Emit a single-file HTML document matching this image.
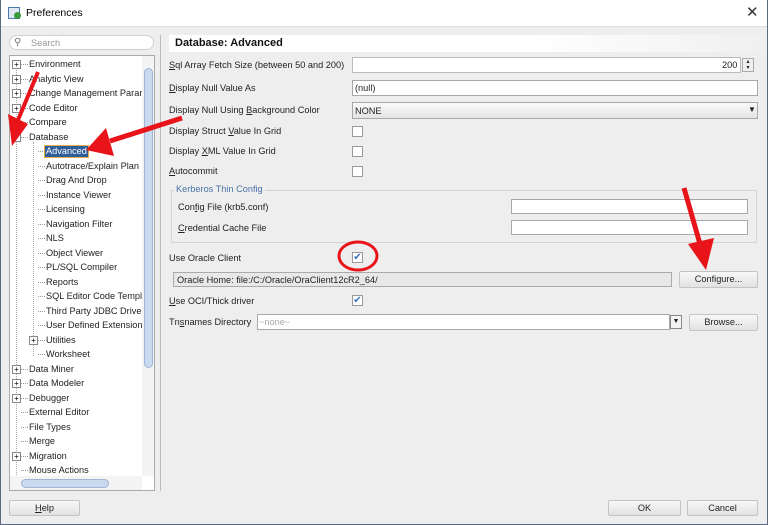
<!DOCTYPE html>
<html><head><style>
*{box-sizing:border-box;margin:0;padding:0}
body{width:768px;height:525px;background:#eeeeee;font-family:"Liberation Sans",sans-serif;font-size:9.2px;color:#222;position:relative;overflow:hidden}
.a{position:absolute;white-space:nowrap}
.win{position:absolute;left:0;top:0;width:768px;height:525px;border:1px solid #5a6a80;border-top:none}
.tb{position:absolute;left:0;top:0;width:768px;height:27px;background:#fff;border-bottom:1px solid #ddd}
.inp{position:absolute;background:#fff;border:1px solid #a8a8a8}
.cb{position:absolute;width:11px;height:11px;border:1px solid #999;background:#fff}
.btn{position:absolute;height:17px;border:1px solid #c4c4c4;border-radius:2px;background:linear-gradient(#f8f8f8,#e2e2e2);text-align:center;line-height:15px}
.pm{position:absolute;width:9px;height:9px;border:1px solid #888;background:#fff;font-size:8px;line-height:7px;text-align:center;color:#000}
.dl{position:absolute;border-top:1px dotted #999;height:0}
</style></head><body>
<div class="tb"></div>
<div class="a" style="left:8px;top:7px;width:12px;height:12px;border:1px solid #4a7bb0;background:#dfe8f3"></div>
<div class="a" style="left:14px;top:12px;width:7px;height:7px;border-radius:50%;background:#3a9a3a"></div>
<div class="a" style="left:26px;top:7px;font-size:10.5px;color:#000">Preferences</div>
<div class="a" style="left:746px;top:3px;font-size:15px;color:#333">✕</div>
<div class="win"></div>

<div class="a" style="left:9px;top:35px;width:145px;height:15px;background:#fff;border:1px solid #d0d0d0;border-radius:8px"></div>
<div class="a" style="left:14px;top:37px;font-size:10px;color:#777">⚲</div>
<div class="a" style="left:31px;top:38px;color:#999">Search</div>

<div class="a" style="left:9px;top:55px;width:146px;height:436px;background:#fff;border:1px solid #aaa"></div>
<div class="a" style="left:16px;top:60px;height:415px;border-left:1px dotted #aaa"></div>
<div class="a" style="left:33px;top:142px;height:214px;border-left:1px dotted #aaa"></div>
<div id="tree"></div>
<div class="a" style="left:142px;top:56px;width:12px;height:420px;background:#f4f4f4"></div>
<div class="a" style="left:144px;top:68px;width:9px;height:300px;background:#c9daf0;border:1px solid #9fb6d6;border-radius:5px"></div>
<div class="a" style="left:10px;top:476px;width:132px;height:14px;background:#f4f4f4"></div>
<div class="a" style="left:21px;top:479px;width:88px;height:9px;background:#c9daf0;border:1px solid #9fb6d6;border-radius:5px"></div>

<div class="a" style="left:160px;top:35px;width:1px;height:456px;background:#bbb"></div>

<div class="a" style="left:169px;top:35px;width:596px;height:17px;background:linear-gradient(90deg,#fff 60%,#f0f0f0)"></div>
<div class="a" style="left:175px;top:37px;font-size:11px;font-weight:bold;color:#111">Database: Advanced</div>

<div class="a" style="left:169px;top:60px"><u>S</u>ql Array Fetch Size (between 50 and 200)</div>
<div class="inp" style="left:352px;top:57px;width:389px;height:16px;border-color:#bbb"></div>
<div class="a" style="left:722px;top:60px">200</div>
<div class="a" style="left:742px;top:58px;width:12px;height:14px;border:1px solid #aaa;background:#eee;font-size:6px;line-height:6px;text-align:center">▴<br>▾</div>
<div class="a" style="left:169px;top:83px"><u>D</u>isplay Null Value As</div>
<div class="inp" style="left:352px;top:80px;width:406px;height:16px"></div>
<div class="a" style="left:355px;top:83px">(null)</div>
<div class="a" style="left:169px;top:105px">Display Null Using <u>B</u>ackground Color</div>
<div class="inp" style="left:352px;top:102px;width:406px;height:17px;background:linear-gradient(#fafafa,#e4e4e4)"></div>
<div class="a" style="left:355px;top:106px">NONE</div>
<div class="a" style="left:748px;top:105px;font-size:8px">▼</div>
<div class="a" style="left:169px;top:126px">Display Struct <u>V</u>alue In Grid</div>
<div class="cb" style="left:352px;top:126px"></div>
<div class="a" style="left:169px;top:146px">Display <u>X</u>ML Value In Grid</div>
<div class="cb" style="left:352px;top:146px"></div>
<div class="a" style="left:169px;top:166px"><u>A</u>utocommit</div>
<div class="cb" style="left:352px;top:166px"></div>

<div class="a" style="left:171px;top:190px;width:586px;height:53px;border:1px solid #d4d4d4"></div>
<div class="a" style="left:174px;top:184px;padding:0 2px;background:#eee;color:#4a73a8">Kerberos Thin Config</div>
<div class="a" style="left:178px;top:202px">Con<u>f</u>ig File (krb5.conf)</div>
<div class="inp" style="left:511px;top:199px;width:237px;height:15px"></div>
<div class="a" style="left:178px;top:223px"><u>C</u>redential Cache File</div>
<div class="inp" style="left:511px;top:220px;width:237px;height:15px"></div>

<div class="a" style="left:169px;top:253px">Use Oracle Client</div>
<div class="cb" style="left:352px;top:252px;color:#3a6fc4;font-size:10px;line-height:9px;text-align:center">✔</div>
<div class="a" style="left:173px;top:272px;width:499px;height:15px;border:1px solid #aaa;background:#e8e8e8"></div>
<div class="a" style="left:177px;top:275px">Oracle Home: file:/C:/Oracle/OraClient12cR2_64/</div>
<div class="btn" style="left:679px;top:271px;width:79px">Configure...</div>
<div class="a" style="left:169px;top:296px"><u>U</u>se OCI/Thick driver</div>
<div class="cb" style="left:352px;top:295px;color:#3a6fc4;font-size:10px;line-height:9px;text-align:center">✔</div>
<div class="a" style="left:169px;top:317px">Tn<u>s</u>names Directory</div>
<div class="inp" style="left:257px;top:314px;width:413px;height:16px"></div>
<div class="a" style="left:259px;top:317px;color:#aaa">~none~</div>
<div class="a" style="left:670px;top:315px;width:12px;height:14px;border:1px solid #888;background:#f4f4f4;font-size:7px;text-align:center;line-height:12px">▼</div>
<div class="btn" style="left:689px;top:314px;width:69px">Browse...</div>

<div class="btn" style="left:9px;top:500px;width:71px;height:16px"><u>H</u>elp</div>
<div class="btn" style="left:608px;top:500px;width:73px;height:16px">OK</div>
<div class="btn" style="left:687px;top:500px;width:71px;height:16px">Cancel</div>

<svg class="a" style="left:0;top:0" width="768" height="525">
<g fill="#e8141a" stroke="#e8141a">
<line x1="38" y1="72" x2="18" y2="120" stroke-width="4"/>
<polygon points="8,114 28,124 12,146" stroke="none"/>
<line x1="182" y1="118" x2="110" y2="141" stroke-width="5"/>
<polygon points="106,128 114,156 86,150" stroke="none"/>
<line x1="684" y1="188" x2="700" y2="244" stroke-width="5"/>
<polygon points="688,244 714,238 706,270" stroke="none"/>
</g>
<ellipse cx="358" cy="256" rx="19" ry="14" fill="none" stroke="#e8141a" stroke-width="3"/>
</svg>

<script>
var items=[[0,"Environment",1],[0,"Analytic View",1],[0,"Change Management Paran",1],[0,"Code Editor",1],[0,"Compare",0],[0,"Database",2],
[1,"Advanced",0],[1,"Autotrace/Explain Plan",0],[1,"Drag And Drop",0],[1,"Instance Viewer",0],[1,"Licensing",0],[1,"Navigation Filter",0],[1,"NLS",0],[1,"Object Viewer",0],[1,"PL/SQL Compiler",0],[1,"Reports",0],[1,"SQL Editor Code Templa",0],[1,"Third Party JDBC Driver",0],[1,"User Defined Extension",0],[1,"Utilities",1],[1,"Worksheet",0],
[0,"Data Miner",1],[0,"Data Modeler",1],[0,"Debugger",1],[0,"External Editor",0],[0,"File Types",0],[0,"Merge",0],[0,"Migration",1],[0,"Mouse Actions",0]];
var h="";
items.forEach(function(it,i){var y=58+i*14.5;var x=it[0]?46:29;var px=it[0]?29:12;
if(it[2])h+='<div class="a pm" style="left:'+px+'px;top:'+(y+2)+'px">'+(it[2]==2?'−':'+')+'</div>';
h+='<div class="a dl" style="left:'+(px+9)+'px;top:'+(y+6)+'px;width:'+(x-px-10)+'px"></div>';
if(it[1]=="Advanced")h+='<div class="a" style="left:'+(x-2)+'px;top:'+(y)+'px;width:45px;height:13px;background:#2f5d99;border:1px solid #e8b040"></div>';
h+='<div class="a" style="left:'+x+'px;top:'+(y+1)+'px;'+(it[1]=="Advanced"?'color:#fff':'')+'">'+it[1]+'</div>';});
document.getElementById("tree").innerHTML=h;
</script>
</body></html>
